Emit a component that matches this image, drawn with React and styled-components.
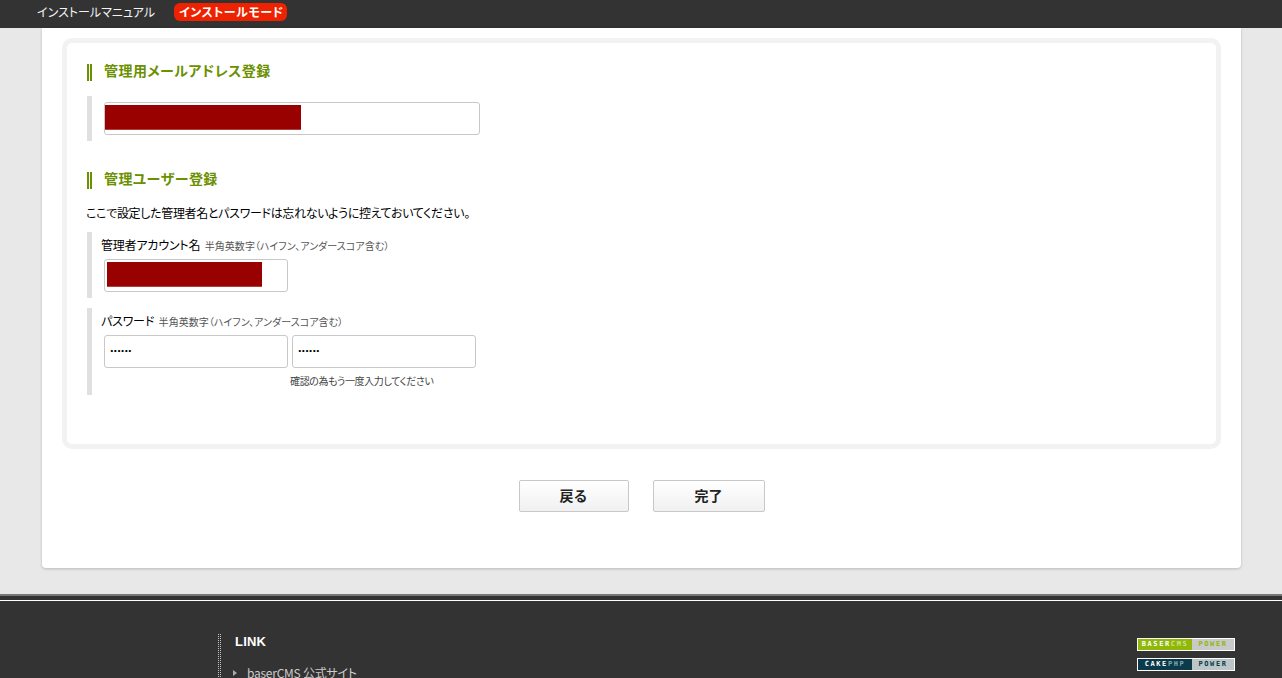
import React from "react";
import styled, { createGlobalStyle } from "styled-components";

const GlobalStyle = createGlobalStyle`
  html, body {
    margin: 0;
    padding: 0;
    height: 678px;
    overflow: hidden;
    background: #e8e8e8;
  }
  body {
    font-family: "Noto Sans CJK JP", "Liberation Sans", sans-serif;
    font-size: 12px;
    font-feature-settings: "palt";
    color: #000;
  }
`;

const TopBar = styled.header`
  height: 28px;
  background: #333333;
  box-sizing: border-box;
  padding-left: 37px;
  display: flex;
  align-items: flex-start;
  gap: 19px;
`;

const TopLink = styled.span`
  width: 118px;
  color: #f4f4f4;
  font-size: 12px;
  line-height: 24px;
  white-space: nowrap;
`;

const TopActive = styled.span`
  margin-top: 3px;
  height: 18px;
  line-height: 17px;
  padding: 0 5px;
  box-sizing: border-box;
  width: 113px;
  white-space: nowrap;
  border-radius: 6px;
  background: #ee2200;
  color: #fff;
  font-size: 12px;
  font-weight: 700;
  letter-spacing: 0.55px;
`;

const Main = styled.main`
  width: 1199px;
  height: 540px;
  margin-left: 42px;
  box-sizing: border-box;
  padding: 10px 20px 0;
  background: #fff;
  border-radius: 0 0 4px 4px;
  box-shadow: 0 1px 3px rgba(0, 0, 0, 0.2);
`;

const Panel = styled.section`
  height: 411px;
  box-sizing: border-box;
  border: 5px solid #f2f2f2;
  border-radius: 10px;
  padding: 16px 20px 0;
`;

const Heading = styled.h2`
  margin: ${(p) => p.$top}px 0 0;
  height: 17px;
  padding-left: 15px;
  border-left: 2px solid #6b9000;
  position: relative;
  color: #6b9000;
  font-size: 14px;
  font-weight: 700;
  line-height: 13px;
  letter-spacing: 0.45px;

  &::before {
    content: "";
    position: absolute;
    left: 1px;
    top: 0;
    width: 2px;
    height: 17px;
    background: #6b9000;
  }
`;

const Note = styled.p`
  margin: 15px 0 0 -1px;
  font-size: 12px;
  line-height: 18px;
  letter-spacing: -0.32px;
`;

const Row = styled.div`
  margin-top: ${(p) => p.$top}px;
  height: ${(p) => p.$height}px;
  box-sizing: border-box;
  border-left: 5px solid #e0e0e0;
  padding-left: 12px;
  padding-top: ${(p) => p.$pad}px;
`;

const Label = styled.div`
  margin-left: -3px;
  height: 23px;
  font-size: 12px;
  line-height: 18px;
  letter-spacing: -0.2px;
  white-space: nowrap;
`;

const Hint = styled.span`
  margin-left: 4.5px;
  color: #555;
  font-size: 10px;
  letter-spacing: 0.05px;
`;

const Fields = styled.div`
  display: flex;
  gap: 4px;
`;

const Field = styled.div`
  width: ${(p) => p.$width}px;
  height: 33px;
  box-sizing: border-box;
  border: 1px solid #c8c8c8;
  border-radius: 3px;
  background: #fff;
  padding: 2px 0 0 ${(p) => p.$inset}px;
`;

const Redacted = styled.div`
  width: ${(p) => p.$width}px;
  height: 25px;
  background: #990000;
  border-bottom: 1px solid #b04040;
  box-sizing: border-box;
`;

const Dots = styled.div`
  padding: 0 0 0 4px;
  color: #000;
  font-family: "Liberation Sans", sans-serif;
  font-size: 13px;
  font-weight: 700;
  line-height: 20px;
`;

const Confirm = styled.div`
  margin: 6px 0 0 186px;
  color: #444;
  font-size: 10px;
  line-height: 14px;
  letter-spacing: -0.37px;
`;

const Actions = styled.div`
  margin-top: 31px;
  padding-left: 457px;
  display: flex;
  gap: 24px;
`;

const Button = styled.button`
  width: ${(p) => p.$width}px;
  height: 32px;
  padding: 0 1px 3px 0;
  box-sizing: border-box;
  border: 1px solid #c8c8c8;
  border-radius: 2px;
  background: linear-gradient(#ffffff, #f0f0f0);
  color: #222;
  font-family: inherit;
  font-size: 14px;
  font-weight: 700;
`;

const Footer = styled.footer`
  margin-top: 26px;
  height: 84px;
  background: #333333;
  border-top: 2px solid #777;
  box-sizing: border-box;
  overflow: hidden;
`;

const FooterRule = styled.div`
  height: 4px;
  background: #333;
  border-bottom: 1px solid #fff;
`;

const FooterInner = styled.div`
  display: flex;
  justify-content: space-between;
  padding: 33px 47px 0 218px;
`;

const LinkColumn = styled.div`
  width: 300px;
  height: 120px;
  box-sizing: border-box;
  padding-left: 17px;
  background:
    repeating-linear-gradient(#c4c4c4 0 1px, transparent 1px 2px) 0 0 / 1px 100% no-repeat,
    repeating-linear-gradient(#c4c4c4 0 1px, transparent 1px 2px) 2px 0 / 1px 100% no-repeat;
`;

const LinkTitle = styled.div`
  color: #fff;
  font-family: "Liberation Sans", sans-serif;
  font-size: 13px;
  font-weight: 700;
  line-height: 15px;
  letter-spacing: 0.2px;
`;

const LinkItem = styled.div`
  margin: 15px 0 0 -2px;
  display: flex;
  align-items: center;
  gap: 10px;
  color: #cccccc;
  font-size: 12px;
  line-height: 17px;
  letter-spacing: -0.25px;
  white-space: nowrap;
`;

const Bullet = styled.span`
  width: 0;
  height: 0;
  border-left: 4px solid #aaa;
  border-top: 3px solid transparent;
  border-bottom: 3px solid transparent;
`;

const Badges = styled.div`
  display: flex;
  flex-direction: column;
  gap: 7px;
  padding-top: 4px;
`;

const Badge = styled.div`
  width: 98px;
  height: 13px;
  box-sizing: border-box;
  border: 1px solid #fff;
  display: flex;
  font-family: "DejaVu Sans Mono", monospace;
  font-size: 7px;
  font-weight: 700;
  line-height: 11px;
  letter-spacing: 1.6px;
`;

const BadgeName = styled.span`
  width: 54px;
  text-align: center;
  background: ${(p) => p.$bg};
  color: #fff;
  white-space: nowrap;

  em {
    font-style: normal;
    color: ${(p) => p.$accent};
  }
`;

const BadgePower = styled.span`
  flex: 1;
  text-align: center;
  background: ${(p) => p.$bg};
  color: ${(p) => p.$color};
`;

export default function App() {
  return (
    <>
      <GlobalStyle />
      <TopBar>
        <TopLink>インストールマニュアル</TopLink>
        <TopActive>インストールモード</TopActive>
      </TopBar>
      <Main>
        <Panel>
          <Heading $top={5}>管理用メールアドレス登録</Heading>
          <Row $top={15} $height={45} $pad={6}>
            <Field $width={376} $inset={0}>
              <Redacted $width={196} />
            </Field>
          </Row>
          <Heading $top={31}>管理ユーザー登録</Heading>
          <Note>ここで設定した管理者名とパスワードは忘れないように控えておいてください。</Note>
          <Row $top={10} $height={66} $pad={4}>
            <Label>
              管理者アカウント名<Hint>半角英数字（ハイフン、アンダースコア含む）</Hint>
            </Label>
            <Field $width={184} $inset={2}>
              <Redacted $width={155} />
            </Field>
          </Row>
          <Row $top={10} $height={87} $pad={4}>
            <Label>
              パスワード<Hint>半角英数字（ハイフン、アンダースコア含む）</Hint>
            </Label>
            <Fields>
              <Field $width={184} $inset={1}>
                <Dots>......</Dots>
              </Field>
              <Field $width={184} $inset={1}>
                <Dots>......</Dots>
              </Field>
            </Fields>
            <Confirm>確認の為もう一度入力してください</Confirm>
          </Row>
        </Panel>
        <Actions>
          <Button $width={110}>戻る</Button>
          <Button $width={112}>完了</Button>
        </Actions>
      </Main>
      <Footer>
        <FooterRule />
        <FooterInner>
          <LinkColumn>
            <LinkTitle>LINK</LinkTitle>
            <LinkItem>
              <Bullet />
              baserCMS 公式サイト
            </LinkItem>
          </LinkColumn>
          <Badges>
            <Badge>
              <BadgeName $bg="#8fb80a" $accent="#cfe08a">
                BASER<em>CMS</em>
              </BadgeName>
              <BadgePower $bg="#c9c9c9" $color="#8fb80a">POWER</BadgePower>
            </Badge>
            <Badge>
              <BadgeName $bg="#0b3a4a" $accent="#7fa6b4">
                CAKE<em>PHP</em>
              </BadgeName>
              <BadgePower $bg="#bcc5c8" $color="#0b3a4a">POWER</BadgePower>
            </Badge>
          </Badges>
        </FooterInner>
      </Footer>
    </>
  );
}
